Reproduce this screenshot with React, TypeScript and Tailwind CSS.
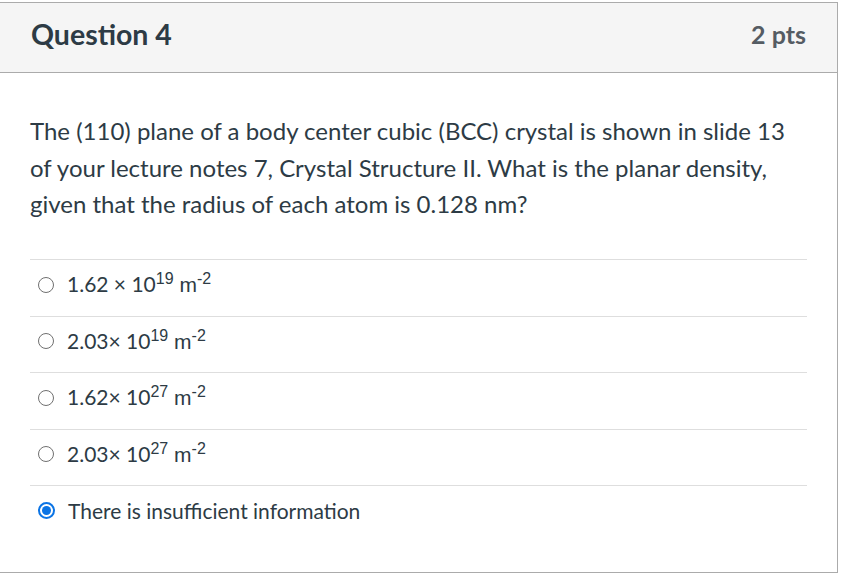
import React from 'react';

const lato = { fontFamily: 'Lato, "Liberation Sans", sans-serif' };
const arial = { fontFamily: '"Liberation Sans", sans-serif' };

type Option = {
  mant: string;
  exp?: string;
  text?: string;
  checked?: boolean;
  rowClass: string;
};

const options: Option[] = [
  { mant: '1.62 × 10', exp: '19', rowClass: 'h-[57px]' },
  { mant: '2.03× 10', exp: '19', rowClass: 'h-[56px]' },
  { mant: '1.62× 10', exp: '27', rowClass: 'h-[57px]' },
  { mant: '2.03× 10', exp: '27', rowClass: 'h-[56px]' },
  { mant: '', text: 'There is insufficient information', checked: true, rowClass: 'h-[57px]' },
];

const Radio = ({ checked }: { checked?: boolean }) =>
  checked ? (
    <span className="flex h-[17px] w-[17px] shrink-0 items-center justify-center rounded-full border-2 border-[#0b74e5] bg-white">
      <span className="h-[9px] w-[9px] rounded-full bg-[#0b74e5]" />
    </span>
  ) : (
    <span className="h-[16px] w-[16px] shrink-0 rounded-full border-[1.5px] border-[#707070] bg-white" />
  );

export default function App() {
  return (
    <div className="h-[578px] w-[843px] overflow-hidden bg-white pt-[2px]" style={lato}>
      <div className="ml-[-1px] h-[571px] w-[839px] border border-[#ababab]">
        <div className="flex h-[70px] items-center justify-between border-b border-[#ababab] bg-[#f5f5f5] px-[31px] pb-[6px]">
          <h2 className="text-[28.5px] font-bold text-[#2d3b45]">Question 4</h2>
          <span className="text-[25px] font-bold text-[#555c63]">2 pts</span>
        </div>
        <div className="px-[30px] pt-[40px]">
          <p className="text-[24px] leading-[36.5px] text-[#2d3b45]">
            The (110) plane of a body center cubic (BCC) crystal is shown in slide 13 of your lecture notes 7,
            Crystal Structure II. What is the planar density, given that the radius of each atom is 0.128 nm?
          </p>
          <div className="mt-[36px]">
            {options.map((o, i) => (
              <div
                key={i}
                className={`flex items-center gap-[13px] border-t border-[#dedede] pb-[6px] pl-[8px] ${o.rowClass}`}
              >
                <Radio checked={o.checked} />
                {o.text ? (
                  <span className="text-[21px] leading-[24px] text-[#2d3b45]">{o.text}</span>
                ) : (
                  <span className="text-[21px] leading-[24px] text-[#2d3b45]">
                    {o.mant}
                    <sup className="text-[16px]" style={arial}>
                      {o.exp}
                    </sup>
                    <span style={arial}> m</span>
                    <sup className="text-[16px]" style={arial}>
                      -2
                    </sup>
                  </span>
                )}
              </div>
            ))}
          </div>
        </div>
      </div>
    </div>
  );
}
